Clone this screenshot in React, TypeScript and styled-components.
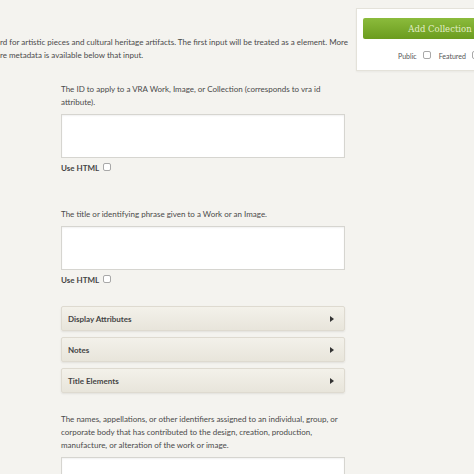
import React from "react";
import styled, { createGlobalStyle } from "styled-components";

const Global = createGlobalStyle`
  html, body { margin: 0; padding: 0; background: #f4f3ef; }
  body { font-family: Lato, "Open Sans", sans-serif; color: #4a4a4a; overflow: hidden; }
  #root { width: 474px; height: 474px; overflow: hidden; }
`;

const Page = styled.div`
  display: grid;
  grid-template-columns: 356px 118px;
  width: 474px;
  height: 474px;
  overflow: hidden;
`;

const Main = styled.div`
  padding-top: 36px;
  display: flex;
  flex-direction: column;
`;

const Intro = styled.p`
  margin: 0;
  font-size: 8px;
  line-height: 13px;
  white-space: nowrap;
  color: #4a4a4a;
`;

const Form = styled.div`
  margin: 21px 0 0 61px;
  width: 284px;
  display: flex;
  flex-direction: column;
`;

const Field = styled.div<{ $mb?: number }>`
  display: flex;
  flex-direction: column;
  margin-bottom: ${(p) => p.$mb ?? 0}px;
`;

const Label = styled.p`
  margin: 0 0 5px;
  font-size: 8px;
  line-height: 13px;
  color: #4a4a4a;
`;

const TextBox = styled.div`
  height: 42px;
  background: #fff;
  border: 1px solid #d6d5d0;
  box-shadow: inset 0 1px 2px rgba(0,0,0,0.06);
`;

const HtmlRow = styled.label`
  display: flex;
  align-items: center;
  gap: 4px;
  margin-top: 5px;
  font-size: 8px;
  font-weight: 700;
  color: #444;
  height: 10px;
`;

const Check = styled.span`
  display: inline-block;
  width: 6px;
  height: 6px;
  border: 1px solid #a8a8a8;
  border-radius: 2px;
  background: #fff;
  margin-top: -3px;
`;

const Accordion = styled.div`
  display: flex;
  flex-direction: column;
  gap: 6px;
  margin-bottom: 20px;
`;

const Bar = styled.div`
  height: 23px;
  display: flex;
  align-items: center;
  justify-content: space-between;
  padding: 0 10px 0 6px;
  background: linear-gradient(#f3f1ea, #e8e5db);
  border: 1px solid #dedad0;
  border-radius: 2px;
  box-shadow: 0 1px 2px rgba(0,0,0,0.08);
  font-size: 8px;
  font-weight: 700;
  color: #454545;
`;

const Arrow = styled.span`
  width: 0;
  height: 0;
  border-top: 3px solid transparent;
  border-bottom: 3px solid transparent;
  border-left: 4px solid #333;
`;

const Side = styled.div`
  padding-top: 8px;
`;

const Panel = styled.div`
  width: 168px;
  height: 63px;
  background: #fff;
  border: 1px solid #e4e2da;
  box-shadow: 0 1px 2px rgba(0,0,0,0.05);
  padding: 9px 0 0 6px;
  box-sizing: border-box;
`;

const AddButton = styled.div`
  width: 154px;
  height: 21px;
  display: flex;
  align-items: center;
  justify-content: center;
  background: linear-gradient(#8bbb3c, #6b9c1e);
  border-radius: 2px;
  color: #e3eec8;
  font-family: "DejaVu Serif", "Liberation Serif", serif;
  font-size: 8.5px;
`;

const Options = styled.div`
  display: flex;
  align-items: center;
  padding-left: 35px;
  margin-top: 13px;
  font-size: 7px;
  color: #555;
`;

const Opt = styled.span`
  display: flex;
  align-items: center;
  gap: 6px;
  margin-right: 8px;
`;

export default function App() {
  return (
    <>
      <Global />
      <Page>
        <Main>
          <Intro>
            rd for artistic pieces and cultural heritage artifacts. The first input will be treated as a element. More
            <br />
            re metadata is available below that input.
          </Intro>
          <Form>
            <Field $mb={35}>
              <Label>The ID to apply to a VRA Work, Image, or Collection (corresponds to vra id attribute).</Label>
              <TextBox />
              <HtmlRow>Use HTML <Check /></HtmlRow>
            </Field>
            <Field $mb={21}>
              <Label>The title or identifying phrase given to a Work or an Image.</Label>
              <TextBox />
              <HtmlRow>Use HTML <Check /></HtmlRow>
            </Field>
            <Accordion>
              <Bar>Display Attributes<Arrow /></Bar>
              <Bar>Notes<Arrow /></Bar>
              <Bar>Title Elements<Arrow /></Bar>
            </Accordion>
            <Field>
              <Label>The names, appellations, or other identifiers assigned to an individual, group, or corporate body that has contributed to the design, creation, production, manufacture, or alteration of the work or image.</Label>
              <TextBox />
            </Field>
          </Form>
        </Main>
        <Side>
          <Panel>
            <AddButton>Add Collection</AddButton>
            <Options>
              <Opt>Public <Check /></Opt>
              <Opt>Featured <Check /></Opt>
            </Options>
          </Panel>
        </Side>
      </Page>
    </>
  );
}
